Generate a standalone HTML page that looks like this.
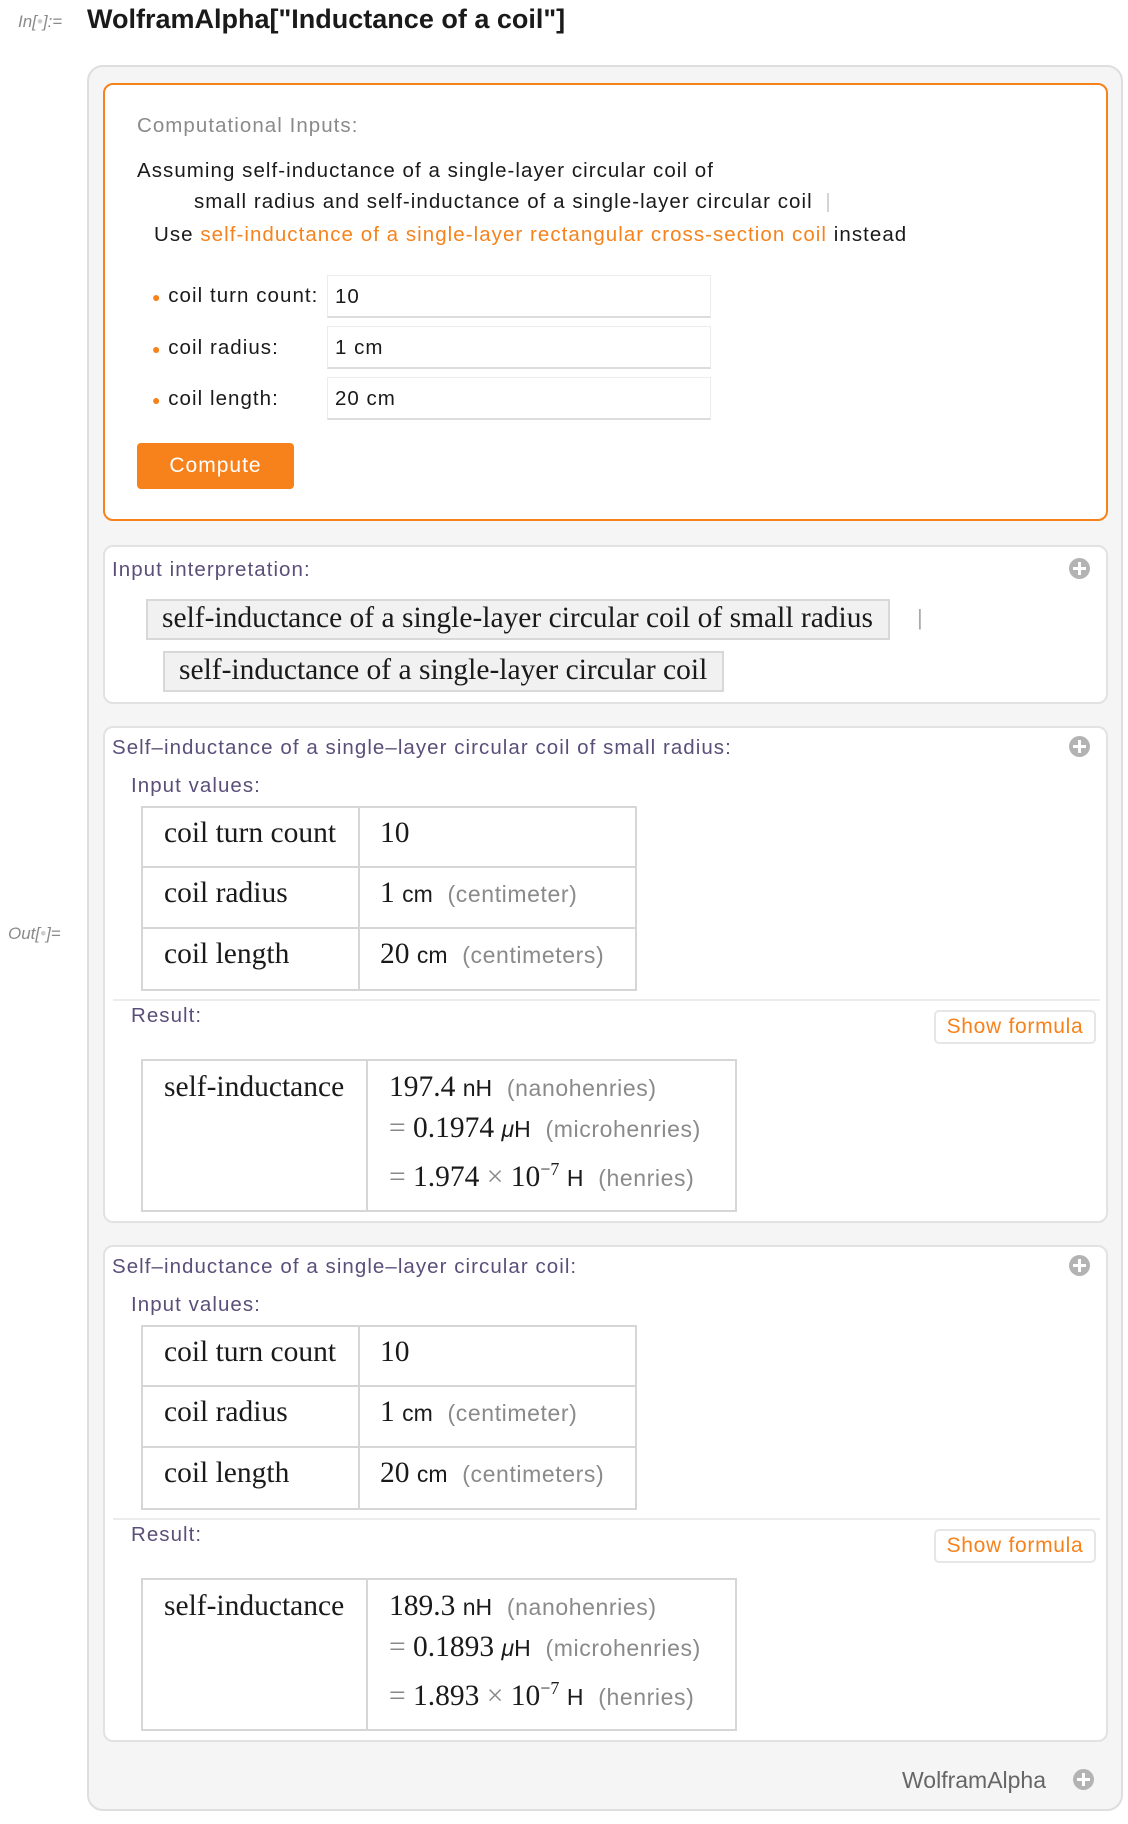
<!DOCTYPE html>
<html><head><meta charset="utf-8"><style>
*{margin:0;padding:0;box-sizing:border-box}
body{width:1128px;height:1824px;background:#fff;position:relative;font-family:"Liberation Sans",sans-serif;color:#1a1a1a;overflow:hidden}
#w{position:absolute;left:0;top:0;width:1128px;height:1824px}
.a{position:absolute;white-space:nowrap}
.t{font-size:20.5px;letter-spacing:1.05px}
.serif{font-family:"Liberation Serif",serif}
.pur{color:#5b4f7a}
.gray{color:#8a8a8a}
.org{color:#f7821b}
.box{position:absolute;background:#fff;border:2px solid #e2e2e2;border-radius:10px}
.plus{position:absolute;width:21px;height:21px;border-radius:50%;background:#b3b3b3}
.plus:before{content:"";position:absolute;left:4px;top:9px;width:13px;height:3px;background:#fff}
.plus:after{content:"";position:absolute;left:9px;top:4px;width:3px;height:13px;background:#fff}
.inp{position:absolute;left:327px;width:384px;height:43px;border:1px solid #ececec;border-bottom:2px solid #dcdcdc;background:#fff;font-size:20.5px;letter-spacing:1px;padding:9px 7px}
.tbl{position:absolute;border:2px solid #d6d6d6}
.vl{position:absolute;background:#d6d6d6;width:2px}
.hl{position:absolute;background:#d6d6d6;height:2px}
.cell{position:absolute;font-family:"Liberation Serif",serif;font-size:29.5px;white-space:nowrap}
.u{font-family:"Liberation Sans",sans-serif;font-size:23px}
.ug{font-family:"Liberation Sans",sans-serif;font-size:23px;color:#8a8a8a;letter-spacing:0.6px}
.sf{position:absolute;left:934px;width:162px;height:34px;border:2px solid #e6e6e6;border-radius:5px;background:#fff;color:#f7821b;font-size:21px;letter-spacing:0.7px;text-align:center;line-height:30px}
</style></head><body><div id="w">

<div class="a gray" style="left:18px;top:12px;font-size:17px;font-style:italic">In[<span style="color:#ccc">•</span>]:=</div>
<div class="a" style="left:87px;top:4px;font-size:27px;font-weight:bold">WolframAlpha["Inductance of a coil"]</div>
<div class="a gray" style="left:8px;top:924px;font-size:17px;font-style:italic">Out[<span style="color:#ccc">•</span>]=</div>

<div style="position:absolute;left:87px;top:65px;width:1036px;height:1746px;background:#f5f5f5;border:2px solid #dedede;border-radius:16px"></div>

<div style="position:absolute;left:103px;top:83px;width:1005px;height:438px;background:#fff;border:2px solid #f7821b;border-radius:10px"></div>
<div class="a gray t" style="left:137px;top:114px">Computational Inputs:</div>
<div class="a t" style="left:137px;top:159px">Assuming self-inductance of a single-layer circular coil of</div>
<div class="a t" style="left:194px;top:190px">small radius and self-inductance of a single-layer circular coil <span style="color:#ccc;margin-left:6px">|</span></div>
<div class="a t" style="left:154px;top:223px">Use <span class="org">self-inductance of a single-layer rectangular cross-section coil</span> instead</div>

<div class="a t" style="left:152px;top:284px"><span class="org" style="font-size:14px">●</span> coil turn count:</div>
<div class="inp" style="top:275px">10</div>
<div class="a t" style="left:152px;top:336px"><span class="org" style="font-size:14px">●</span> coil radius:</div>
<div class="inp" style="top:326px">1 cm</div>
<div class="a t" style="left:152px;top:387px"><span class="org" style="font-size:14px">●</span> coil length:</div>
<div class="inp" style="top:377px">20 cm</div>
<div style="position:absolute;left:137px;top:443px;width:157px;height:46px;background:#f7821b;border-radius:4px;color:#fff;font-size:21px;letter-spacing:1px;text-align:center;line-height:46px">Compute</div>

<div class="box" style="left:103px;top:545px;width:1005px;height:159px"></div>
<div class="a pur t" style="left:112px;top:558px">Input interpretation:</div>
<div class="plus" style="left:1069px;top:558px"></div>
<div class="a serif" style="left:146px;top:599px;width:744px;height:41px;background:#f1f1f1;border:2px solid #d8d8d8;font-size:29.5px;line-height:35px;padding:0 14px">self-inductance of a single-layer circular coil of small radius</div>
<div class="a" style="left:917px;top:605px;font-size:22px;color:#aaa">|</div>
<div class="a serif" style="left:163px;top:651px;width:561px;height:41px;background:#f1f1f1;border:2px solid #d8d8d8;font-size:29.5px;line-height:35px;padding:0 14px">self-inductance of a single-layer circular coil</div>

<!-- pod 1 -->
<div class="box" style="left:103px;top:726px;width:1005px;height:497px"></div>
<div class="a pur t" style="left:112px;top:736px">Self–inductance of a single–layer circular coil of small radius:</div>
<div class="plus" style="left:1069px;top:736px"></div>
<div class="a pur t" style="left:131px;top:774px">Input values:</div>
<div class="tbl" style="left:141px;top:806px;width:496px;height:185px"></div>
<div class="vl" style="left:358px;top:806px;height:185px"></div>
<div class="hl" style="left:141px;top:866px;width:496px"></div>
<div class="hl" style="left:141px;top:927px;width:496px"></div>
<div class="cell" style="left:164px;top:817px">coil turn count</div>
<div class="cell" style="left:380px;top:817px">10</div>
<div class="cell" style="left:164px;top:877px">coil radius</div>
<div class="cell" style="left:380px;top:877px">1 <span class="u">cm</span>&nbsp; <span class="ug">(centimeter)</span></div>
<div class="cell" style="left:164px;top:938px">coil length</div>
<div class="cell" style="left:380px;top:938px">20 <span class="u">cm</span>&nbsp; <span class="ug">(centimeters)</span></div>
<div class="hl" style="left:113px;top:999px;width:987px;background:#ececec"></div>
<div class="a pur t" style="left:131px;top:1004px">Result:</div>
<div class="sf" style="top:1010px">Show formula</div>
<div class="tbl" style="left:141px;top:1059px;width:596px;height:153px"></div>
<div class="vl" style="left:366px;top:1059px;height:153px"></div>
<div class="cell" style="left:164px;top:1071px">self-inductance</div>
<div class="cell" style="left:389px;top:1071px">197.4 <span class="u">nH</span>&nbsp; <span class="ug">(nanohenries)</span></div>
<div class="cell" style="left:389px;top:1112px"><span style="color:#888">=</span> 0.1974 <span class="u"><i>μ</i>H</span>&nbsp; <span class="ug">(microhenries)</span></div>
<div class="cell" style="left:389px;top:1159px"><span style="color:#888">=</span> 1.974<span style="color:#888"> × </span>10<sup style="font-size:18px">−7</sup> <span class="u">H</span>&nbsp; <span class="ug">(henries)</span></div>

<!-- pod 2 -->
<div class="box" style="left:103px;top:1245px;width:1005px;height:497px"></div>
<div class="a pur t" style="left:112px;top:1255px">Self–inductance of a single–layer circular coil:</div>
<div class="plus" style="left:1069px;top:1255px"></div>
<div class="a pur t" style="left:131px;top:1293px">Input values:</div>
<div class="tbl" style="left:141px;top:1325px;width:496px;height:185px"></div>
<div class="vl" style="left:358px;top:1325px;height:185px"></div>
<div class="hl" style="left:141px;top:1385px;width:496px"></div>
<div class="hl" style="left:141px;top:1446px;width:496px"></div>
<div class="cell" style="left:164px;top:1336px">coil turn count</div>
<div class="cell" style="left:380px;top:1336px">10</div>
<div class="cell" style="left:164px;top:1396px">coil radius</div>
<div class="cell" style="left:380px;top:1396px">1 <span class="u">cm</span>&nbsp; <span class="ug">(centimeter)</span></div>
<div class="cell" style="left:164px;top:1457px">coil length</div>
<div class="cell" style="left:380px;top:1457px">20 <span class="u">cm</span>&nbsp; <span class="ug">(centimeters)</span></div>
<div class="hl" style="left:113px;top:1518px;width:987px;background:#ececec"></div>
<div class="a pur t" style="left:131px;top:1523px">Result:</div>
<div class="sf" style="top:1529px">Show formula</div>
<div class="tbl" style="left:141px;top:1578px;width:596px;height:153px"></div>
<div class="vl" style="left:366px;top:1578px;height:153px"></div>
<div class="cell" style="left:164px;top:1590px">self-inductance</div>
<div class="cell" style="left:389px;top:1590px">189.3 <span class="u">nH</span>&nbsp; <span class="ug">(nanohenries)</span></div>
<div class="cell" style="left:389px;top:1631px"><span style="color:#888">=</span> 0.1893 <span class="u"><i>μ</i>H</span>&nbsp; <span class="ug">(microhenries)</span></div>
<div class="cell" style="left:389px;top:1678px"><span style="color:#888">=</span> 1.893<span style="color:#888"> × </span>10<sup style="font-size:18px">−7</sup> <span class="u">H</span>&nbsp; <span class="ug">(henries)</span></div>

<div class="a" style="left:902px;top:1767px;font-size:23px;color:#666">WolframAlpha</div>
<div class="plus" style="left:1073px;top:1769px"></div>
</div></body></html>
